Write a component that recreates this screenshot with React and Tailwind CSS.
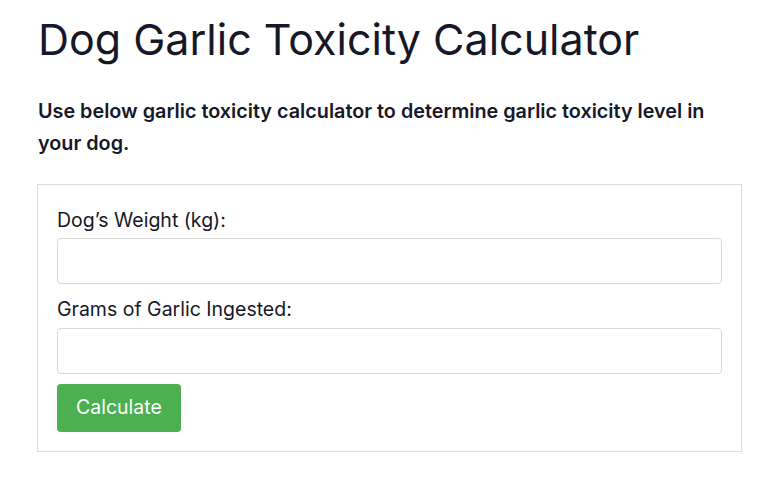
import React, { useState } from 'react';

const inputClass =
  'w-full h-[46px] rounded border border-[#d9d9d9] px-3 text-[19.5px] outline-none';

const GarlicCalculator = () => {
  const [weight, setWeight] = useState('');
  const [grams, setGrams] = useState('');

  return (
    <div className="min-h-screen bg-white font-['Inter',sans-serif] text-[#171827] pt-[14px] pl-[38px] pr-[26px]">
      <h1 className="text-[43px] leading-[50px] font-normal">
        Dog Garlic Toxicity Calculator
      </h1>

      <p className="mt-[31px] text-[19.8px] leading-[32px] font-semibold max-w-[680px]">
        Use below garlic toxicity calculator to determine garlic toxicity level in your dog.
      </p>

      <div className="mt-[25px] w-[705px] -ml-px border border-[#dcdcdc] px-[19px] pt-[21px] pb-[19px]">
        <label className="block text-[19.5px] leading-[28px] mb-[4px]">Dog’s Weight (kg):</label>
        <input
          type="number"
          className={inputClass}
          value={weight}
          onChange={e => setWeight(e.target.value)}
        />

        <label className="block text-[19.5px] leading-[28px] mt-[11px] mb-[5px]">
          Grams of Garlic Ingested:
        </label>
        <input
          type="number"
          className={inputClass}
          value={grams}
          onChange={e => setGrams(e.target.value)}
        />

        <button className="mt-[10px] h-[48px] px-[19px] rounded bg-[#4caf50] text-white text-[19.5px]">
          Calculate
        </button>
      </div>
    </div>
  );
};

export default function App() {
  return <GarlicCalculator />;
}
